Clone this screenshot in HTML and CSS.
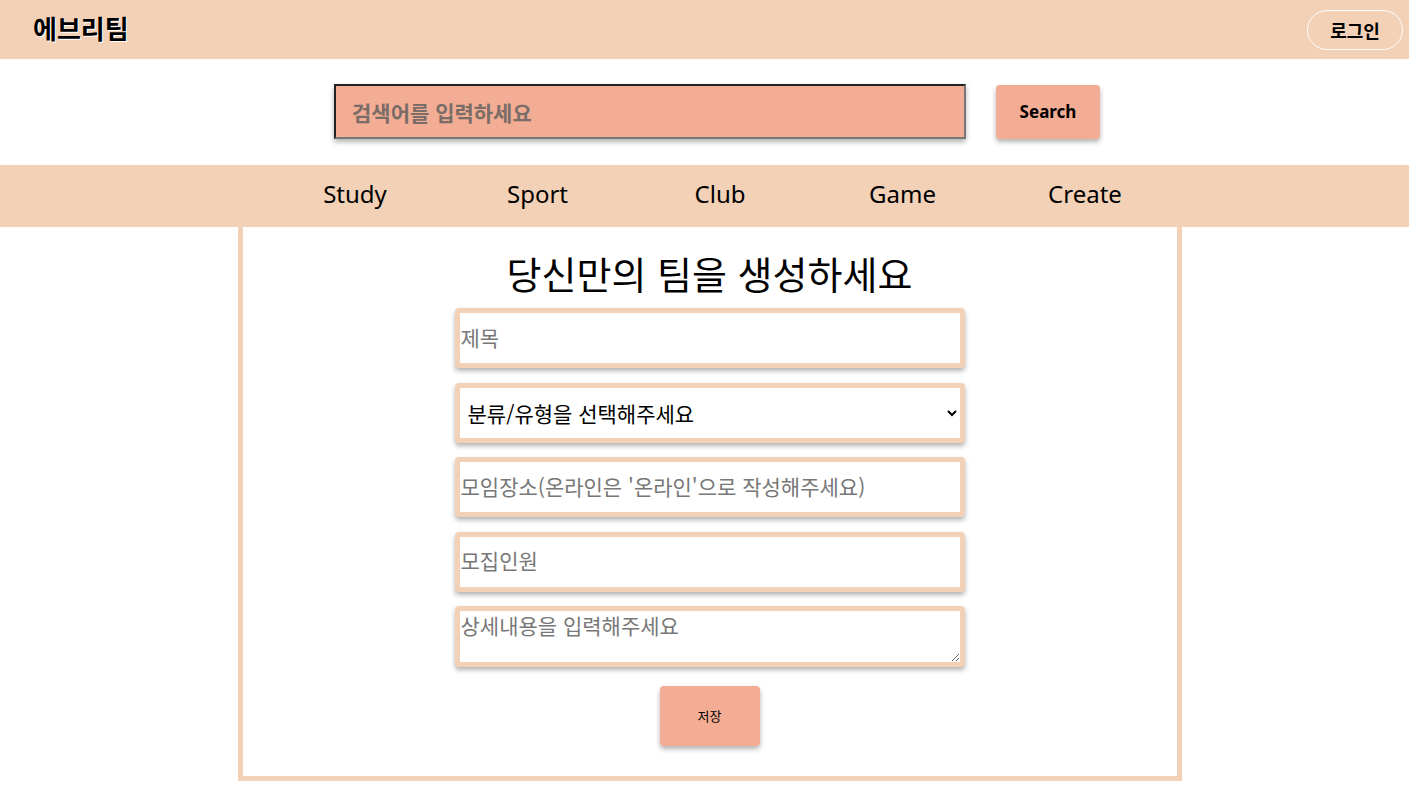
FILE: index.html
```html
<!DOCTYPE html>
<html lang="ko">
<head>
  <meta charset="utf-8">
  <title>에브리팀 - 팀 생성</title>
  <link rel="stylesheet" href="styles.css">
</head>
<body>
  <!-- Top bar -->
  <header class="topbar">
    <div class="logo">에브리팀</div>
    <button class="login-button">로그인</button>
  </header>

  <!-- Search -->
  <div class="search-row">
    <input type="text" class="search-input" placeholder="검색어를 입력하세요">
    <button class="search-button">Search</button>
  </div>

  <!-- Category menu -->
  <nav class="menu">
    <ul>
      <li>Study</li>
      <li>Sport</li>
      <li>Club</li>
      <li>Game</li>
      <li>Create</li>
    </ul>
  </nav>

  <!-- Create team form -->
  <div class="create-box">
    <h2 class="create-title">당신만의 팀을 생성하세요</h2>
    <form class="create-form">
      <input type="text" class="field" placeholder="제목">
      <select class="field field-select">
        <option>분류/유형을 선택해주세요</option>
      </select>
      <input type="text" class="field" placeholder="모임장소(온라인은 '온라인'으로 작성해주세요)">
      <input type="text" class="field" placeholder="모집인원">
      <textarea class="field field-area" placeholder="상세내용을 입력해주세요"></textarea>
      <button type="button" class="save-button">저장</button>
    </form>
  </div>
</body>
</html>
```

FILE: styles.css
```css
body {
  font-family: "Noto Sans", "Noto Sans CJK KR", sans-serif;
  margin: 0;
  background-color: #fff;
}

.topbar {
  height: 59px;
  background-color: #f2d1b7;
  display: flex;
  align-items: center;
  justify-content: space-between;
  padding: 0 6px 0 33px;
}

.logo {
  font-family: "Noto Sans CJK KR", sans-serif;
  font-size: 26px;
  font-weight: bold;
  line-height: 30px;
  margin-top: -4px;
  text-shadow: 1px 1px 0 #fff;
}

.login-button {
  width: 96px;
  height: 40px;
  border: 1px solid #fff;
  border-radius: 20px;
  background: transparent;
  font-family: "Noto Sans CJK KR", sans-serif;
  font-size: 18px;
  font-weight: bold;
  cursor: pointer;
}

.search-row {
  display: flex;
  justify-content: center;
  align-items: center;
  gap: 30px;
  padding: 25px 0 26px 25px;
}

.search-input {
  box-sizing: border-box;
  width: 632px;
  height: 55px;
  background-color: #f3ad94;
  border: 2px solid #777;
  border-top-color: #222;
  border-left-color: #222;
  box-shadow: 0 3px 5px rgba(0, 0, 0, 0.3);
  padding: 0 16px;
  font-family: "Noto Sans CJK KR", sans-serif;
  font-size: 21px;
  font-weight: bold;
}

.search-input::placeholder {
  color: #7a6c66;
}

.search-button {
  width: 104px;
  height: 54px;
  border: none;
  border-radius: 4px;
  background-color: #f3ad94;
  box-shadow: 0 3px 5px rgba(0, 0, 0, 0.3);
  font-family: "Noto Sans", sans-serif;
  font-size: 17px;
  font-weight: bold;
  cursor: pointer;
}

.menu {
  height: 62px;
  background-color: #f2d1b7;
}

.menu ul {
  list-style: none;
  margin: 0;
  padding: 0 0 4px 31px;
  box-sizing: border-box;
  height: 62px;
  display: flex;
  justify-content: center;
  align-items: center;
}

.menu li {
  width: 182.5px;
  text-align: center;
  font-size: 24px;
  line-height: 30px;
}

.create-box {
  box-sizing: border-box;
  width: 944px;
  margin-left: calc(50% - 467px);
  border: 5px solid #f2d1b7;
  border-top: none;
  padding: 22px 0 30px;
}

.create-title {
  margin: 0;
  text-align: center;
  font-family: "Noto Sans CJK KR", sans-serif;
  font-size: 38px;
  font-weight: normal;
  line-height: 47px;
}

.create-form {
  margin-top: 12px;
  display: flex;
  flex-direction: column;
  align-items: center;
  gap: 14.5px;
}

.field {
  box-sizing: border-box;
  width: 510px;
  height: 60px;
  border: 5px solid #f2d1b7;
  border-radius: 4px;
  box-shadow: 0 3px 5px rgba(0, 0, 0, 0.3);
  background-color: #fff;
  padding: 0 1px 3px;
  font-family: "Noto Sans CJK KR", sans-serif;
  font-size: 21px;
  outline: none;
}

.field::placeholder {
  color: #777;
}

.field-select {
  padding: 0 4px;
  color: #000;
}

.field-area {
  height: 61px;
  padding-top: 0;
  line-height: 28px;
  resize: vertical;
}

.save-button {
  width: 100px;
  height: 60px;
  margin-top: 4px;
  border: none;
  border-radius: 4px;
  background-color: #f3ad94;
  box-shadow: 0 3px 5px rgba(0, 0, 0, 0.3);
  font-family: "Noto Sans CJK KR", sans-serif;
  font-size: 13px;
  cursor: pointer;
}
```
